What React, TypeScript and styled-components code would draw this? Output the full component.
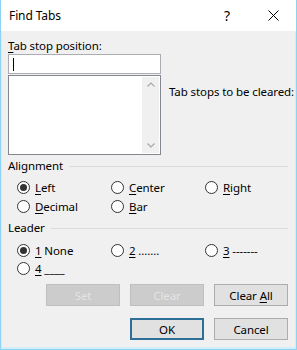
import React from "react";
import styled, { createGlobalStyle } from "styled-components";

const GlobalStyle = createGlobalStyle`
  html, body {
    margin: 0;
    padding: 0;
    background: #f0f0f0;
  }
  body {
    font-family: "Noto Sans", "Open Sans", sans-serif;
    font-size: 11.5px;
    letter-spacing: -0.1px;
    color: #000;
  }
`;

const Window = styled.div`
  box-sizing: border-box;
  width: 297px;
  height: 350px;
  display: flex;
  flex-direction: column;
  background: #f0f0f0;
  border: 1px solid #8fd3f2;
  border-top: none;
  box-shadow: inset 1px 0 0 #d2eefb, inset -1px 0 0 #d2eefb, inset 0 -2px 0 #d2eefb;
`;

const TitleBar = styled.div`
  height: 31px;
  flex: none;
  display: flex;
  align-items: center;
  background: #fff;
  padding-left: 8px;
`;

const Title = styled.span`
  flex: 1;
  font-size: 12px;
  margin-top: -1px;
`;

const TitleButton = styled.div`
  width: 46px;
  height: 31px;
  display: flex;
  align-items: center;
  justify-content: center;
  font-size: 14px;
`;

const Body = styled.div`
  display: flex;
  flex-direction: column;
  padding: 6px 8px 0 7px;
`;

const FieldLabel = styled.div`
  line-height: 17px;
`;

const Key = styled.span`
  text-decoration: underline;
  text-underline-offset: 2px;
`;

const Input = styled.div`
  box-sizing: border-box;
  width: 153px;
  height: 20px;
  background: #fff;
  border: 1px solid #abadb3;
  display: flex;
  align-items: center;
  padding-left: 4px;
`;

const Caret = styled.div`
  width: 1px;
  height: 13px;
  background: #000;
`;

const ListRow = styled.div`
  display: flex;
  margin-top: 1px;
`;

const ListBox = styled.div`
  box-sizing: border-box;
  flex: none;
  width: 153px;
  height: 80px;
  background: #fff;
  border: 1px solid #828790;
  display: flex;
  justify-content: flex-end;
  padding: 1px;
`;

const ScrollBar = styled.div`
  width: 17px;
  background: #f0f0f0;
  display: flex;
  flex-direction: column;
  justify-content: space-between;
  align-items: center;
  padding: 5px 0;
`;

const ClearedLabel = styled.div`
  margin-left: 8px;
  margin-top: 9px;
  line-height: 16px;
  white-space: nowrap;
`;

const Section = styled.div`
  display: flex;
  align-items: center;
  line-height: 16px;
  margin-top: ${(p: { $top: number }) => p.$top}px;
`;

const Rule = styled.div`
  flex: 1;
  height: 1px;
  background: #dcdcdc;
  margin-left: 6px;
  margin-right: 0;
`;

const RadioGrid = styled.div`
  display: grid;
  grid-template-columns: 94px 94px 94px;
  row-gap: ${(p: { $gap: number }) => p.$gap}px;
  padding-left: 9px;
  margin-top: ${(p: { $gap: number; $top: number }) => p.$top}px;
`;

const RadioItem = styled.div`
  display: flex;
  align-items: center;
  height: 16px;
`;

const Circle = styled.div<{ $on?: boolean }>`
  box-sizing: border-box;
  width: 13px;
  height: 13px;
  border-radius: 50%;
  border: 1px solid #333;
  background: #fff;
  display: flex;
  align-items: center;
  justify-content: center;
  margin-right: 5px;
  &::after {
    content: "";
    display: ${(p) => (p.$on ? "block" : "none")};
    width: 7px;
    height: 7px;
    border-radius: 50%;
    background: #333;
  }
`;

const ButtonRow = styled.div`
  display: flex;
  justify-content: flex-end;
  gap: 10px;
  margin-top: ${(p: { $top: number }) => p.$top}px;
`;

const Button = styled.div<{ $disabled?: boolean; $default?: boolean }>`
  box-sizing: border-box;
  width: 74px;
  height: 22px;
  display: flex;
  align-items: center;
  justify-content: center;
  background: ${(p) => (p.$disabled ? "#cccccc" : "#e1e1e1")};
  color: ${(p) => (p.$disabled ? "#e4e4e4" : "#000")};
  border: ${(p) =>
    p.$default ? "2px solid #2d6f96" : p.$disabled ? "1px solid #bfbfbf" : "1px solid #adadad"};
`;

const Chevron = ({ up }: { up?: boolean }) => (
  <svg width="8" height="5" viewBox="0 0 8 5">
    <path
      d={up ? "M0.5 4.5 L4 1 L7.5 4.5" : "M0.5 0.5 L4 4 L7.5 0.5"}
      fill="none"
      stroke="#a6a6a6"
      strokeWidth="1.1"
    />
  </svg>
);

const CloseIcon = () => (
  <svg width="11" height="11" viewBox="0 0 11 11">
    <path d="M0.5 0.5 L10.5 10.5 M10.5 0.5 L0.5 10.5" stroke="#000" strokeWidth="1" />
  </svg>
);

type Opt = { key: string; rest: string; on?: boolean };

const alignment: Opt[] = [
  { key: "L", rest: "eft", on: true },
  { key: "C", rest: "enter" },
  { key: "R", rest: "ight" },
  { key: "D", rest: "ecimal" },
  { key: "B", rest: "ar" },
];

const leader: Opt[] = [
  { key: "1", rest: " None", on: true },
  { key: "2", rest: " ......." },
  { key: "3", rest: " -------" },
  { key: "4", rest: " ____" },
];

const Radios = ({ items, gap, top }: { items: Opt[]; gap: number; top: number }) => (
  <RadioGrid $gap={gap} $top={top}>
    {items.map((o) => (
      <RadioItem key={o.key}>
        <Circle $on={o.on} />
        <span>
          <Key>{o.key}</Key>
          {o.rest}
        </span>
      </RadioItem>
    ))}
  </RadioGrid>
);

export default function App() {
  return (
    <>
      <GlobalStyle />
      <Window>
        <TitleBar>
          <Title>Find Tabs</Title>
          <TitleButton>?</TitleButton>
          <TitleButton>
            <CloseIcon />
          </TitleButton>
        </TitleBar>
        <Body>
          <FieldLabel>
            <Key>T</Key>ab stop position:
          </FieldLabel>
          <Input>
            <Caret />
          </Input>
          <ListRow>
            <ListBox>
              <ScrollBar>
                <Chevron up />
                <Chevron />
              </ScrollBar>
            </ListBox>
            <ClearedLabel>Tab stops to be cleared:</ClearedLabel>
          </ListRow>
          <Section $top={3}>
            Alignment
            <Rule />
          </Section>
          <Radios items={alignment} gap={3} top={5} />
          <Section $top={6}>
            Leader
            <Rule />
          </Section>
          <Radios items={leader} gap={2} top={6} />
          <ButtonRow $top={8}>
            <Button $disabled>Set</Button>
            <Button $disabled>Clear</Button>
            <Button>
              <span>
                Clear <Key>A</Key>ll
              </span>
            </Button>
          </ButtonRow>
          <ButtonRow $top={12}>
            <Button $default>OK</Button>
            <Button>Cancel</Button>
          </ButtonRow>
        </Body>
      </Window>
    </>
  );
}
